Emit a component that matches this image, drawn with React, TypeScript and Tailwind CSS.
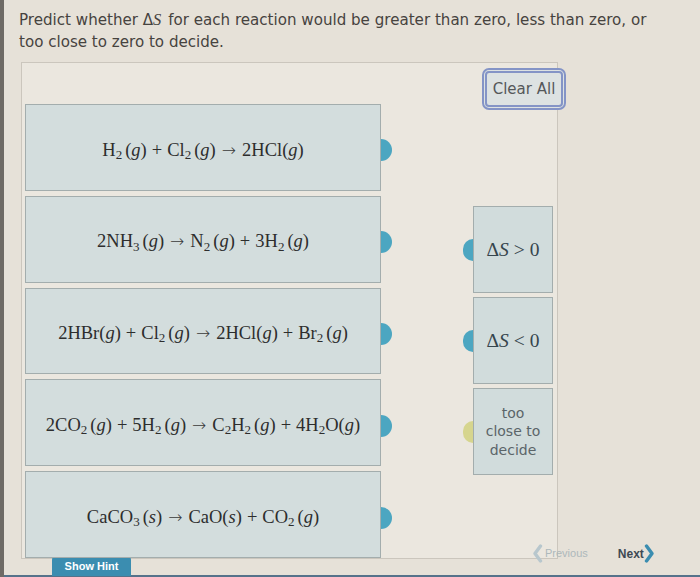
import React from 'react'

const reactions = [
  'H2(g) + Cl2(g) -> 2HCl(g)',
  '2NH3(g) -> N2(g) + 3H2(g)',
  '2HBr(g) + Cl2(g) -> 2HCl(g) + Br2(g)',
  '2CO2(g) + 5H2(g) -> C2H2(g) + 4H2O(g)',
  'CaCO3(s) -> CaO(s) + CO2(g)',
]

// one species, e.g. "2NH3(g)" -> coefficient, elements with subscripts, italic state
function Species({ f }: { f: string }) {
  const m = f.match(/^(\d*)(.+)\((\w)\)$/)
  if (!m) return <span>{f}</span>
  const [, coef, body, state] = m
  const parts = body.match(/[A-Z][a-z]?\d*/g) ?? []
  const endsWithSub = /\d$/.test(body)
  return (
    <span className="whitespace-nowrap">
      {coef}
      {parts.map((p, i) => {
        const el = p.replace(/\d+$/, '')
        const n = p.slice(el.length)
        return (
          <span key={i}>
            {el}
            {n && <sub className="text-[13px]">{n}</sub>}
          </span>
        )
      })}
      <span className={endsWithSub ? 'ml-[3px]' : ''}>(</span>
      <i>{state}</i>)
    </span>
  )
}

function Equation({ text }: { text: string }) {
  return (
    <span className="font-['Liberation_Serif',serif] text-[18.5px] text-[#2d2d2d]">
      {text.split(' ').map((t, i) => {
        if (t === '+') return <span key={i} className="mx-[5px]">+</span>
        if (t === '->')
          return (
            <span key={i} className="mx-[6px] font-['DejaVu_Sans',sans-serif] text-[17px] leading-none font-extralight text-[#3a3a3a]">
              →
            </span>
          )
        return <Species key={i} f={t} />
      })}
    </span>
  )
}

function ReactionCard({ text }: { text: string }) {
  return (
    <div className="relative w-[356px] h-[87px] bg-[#d3dddd] border border-[#a3adad] flex items-center justify-center pt-[6px]">
      <Equation text={text} />
      <div className="absolute right-[-12px] top-1/2 -translate-y-1/2 mt-[3px] w-[11px] h-[22px] rounded-r-full bg-[#4ca6c1]" />
    </div>
  )
}

function AnswerCard({ children, tab }: { children: React.ReactNode; tab: string }) {
  return (
    <div className="relative w-[80px] h-[87px] bg-[#d1dcdc] border border-[#a3adad] flex items-center justify-center text-center">
      <div className={`absolute left-[-11px] top-1/2 -translate-y-1/2 w-[10px] h-[22px] rounded-l-full ${tab}`} />
      {children}
    </div>
  )
}

function Chevron({ dir, color }: { dir: 'left' | 'right'; color: string }) {
  return (
    <svg width="11" height="19" viewBox="0 0 11 19" fill="none">
      <path
        d={dir === 'left' ? 'M8.5 2L3 9.5L8.5 17' : 'M2.5 2L8 9.5L2.5 17'}
        stroke={color}
        strokeWidth="3.4"
        strokeLinecap="round"
        strokeLinejoin="round"
      />
    </svg>
  )
}

export default function App() {
  return (
    <div className="w-[700px] h-[577px] flex bg-[#e6e1d8] overflow-hidden font-['DejaVu_Sans',sans-serif]">
      {/* window edge */}
      <div className="w-[4px] shrink-0 bg-[#6e6a65]" />

      <div className="flex-1 flex flex-col pl-[15px] border-b-2 border-[#55728a]">
        <p className="pt-[9px] text-[15.1px] leading-[22px] text-[#46433f] whitespace-nowrap">
          Predict whether Δ<i className="font-['Liberation_Serif',serif] text-[16.5px] mr-[2px]">S</i> for each reaction would be greater than zero, less than zero, or
          <br />
          too close to zero to decide.
        </p>

        {/* sorting panel */}
        <div className="mt-[9px] ml-[2px] w-[537px] h-[497px] shrink-0 border border-[#cbc6bd] bg-[#ebe7df] flex">
          <div className="pt-[41px] pl-[3px] flex flex-col gap-[5px]">
            {reactions.map((r) => (
              <ReactionCard key={r} text={r} />
            ))}
          </div>

          <div className="flex-1 flex flex-col items-end">
            <button className="mt-[5px] mr-[-9px] w-[84px] h-[42px] shrink-0 rounded-[7px] border-[5px] border-double border-[#8494c6] bg-[#dde2e2] text-[15px] text-[#55585a]">
              Clear All
            </button>

            <div className="mt-[96px] mr-[4px] flex flex-col gap-[4px]">
              <AnswerCard tab="bg-[#4ca6c1]">
                <span className="font-['Liberation_Serif',serif] text-[19.5px] text-[#36454d]">
                  Δ<i>S</i>
                  <span className="mx-[5px]">&gt;</span>0
                </span>
              </AnswerCard>
              <AnswerCard tab="bg-[#4ca6c1]">
                <span className="font-['Liberation_Serif',serif] text-[19.5px] text-[#36454d]">
                  Δ<i>S</i>
                  <span className="mx-[5px]">&lt;</span>0
                </span>
              </AnswerCard>
              <AnswerCard tab="bg-[#d6d58e]">
                <span className="text-[14px] leading-[18.5px] text-[#5b6569]">
                  too
                  <br />
                  close to
                  <br />
                  decide
                </span>
              </AnswerCard>
            </div>
          </div>
        </div>

        {/* footer */}
        <div className="flex items-start -mt-[3px]">
          <button className="ml-[33px] w-[79px] h-[20px] rounded-t-[4px] bg-[#3b8db0] text-white text-[11px] font-bold font-['Liberation_Sans',sans-serif]">
            Show Hint
          </button>
          <div className="ml-[401px] -mt-[12px] flex items-center">
            <Chevron dir="left" color="#b8c7cd" />
            <span className="ml-[2px] text-[11px] text-[#adb8bb] font-['Liberation_Sans',sans-serif]">Previous</span>
            <span className="ml-[30px] text-[12px] font-semibold text-[#3e4a54] font-['Liberation_Sans',sans-serif]">Next</span>
            <Chevron dir="right" color="#3b8db0" />
          </div>
        </div>
      </div>
    </div>
  )
}
